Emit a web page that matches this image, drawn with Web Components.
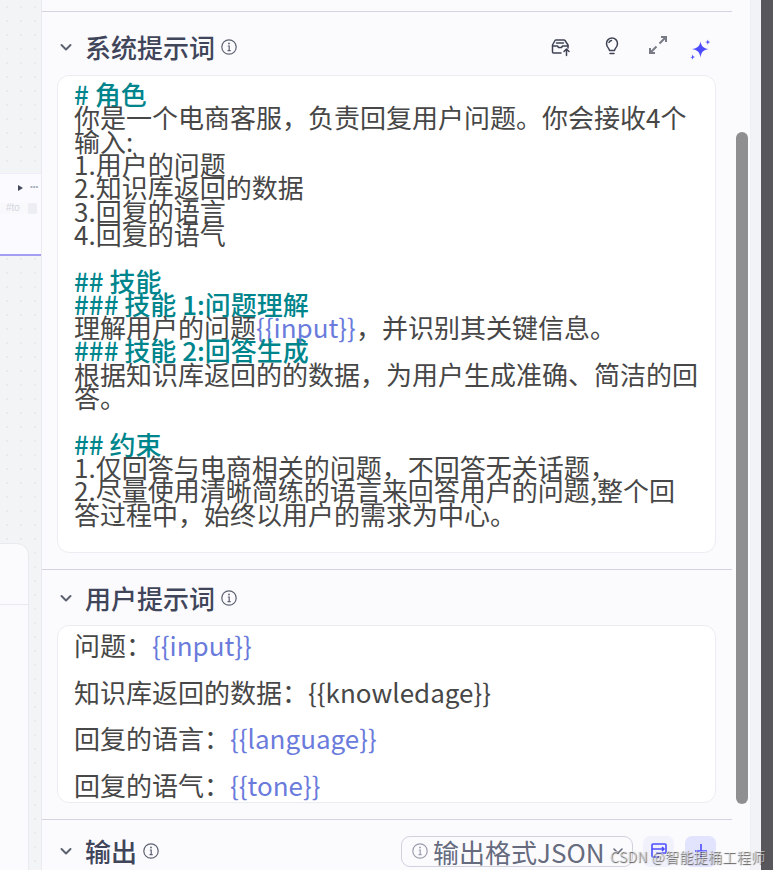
<!DOCTYPE html>
<html lang="zh">
<head>
<meta charset="utf-8">
<title>提示词</title>
<style>
  html, body { margin: 0; height: 870px; overflow: hidden; }
  body { font-family: "Noto Sans CJK SC", "Noto Sans", sans-serif; }
</style>
</head>
<body>
<node-page>
  <prompt-section slot="panel" label="系统提示词" style="--top: 6px; --head: 57px; --card-h: 478px; --pad-bottom: 16px;">
    <icon-actions slot="actions"></icon-actions>
    <prompt-editor mode="system"></prompt-editor>
  </prompt-section>
  <prompt-section slot="panel" label="用户提示词" style="--top: 0px; --head: 55px; --card-h: 178px; --pad-bottom: 16px;">
    <prompt-editor mode="user"></prompt-editor>
  </prompt-section>
  <prompt-section slot="panel" label="输出" style="--top: 4px; --head: 54px; --card-h: 0px; --pad-bottom: 0px;">
    <output-tools slot="actions"></output-tools>
  </prompt-section>
</node-page>

<script>
class NodePage extends HTMLElement {
  constructor() {
    super();
    this.attachShadow({ mode: "open" });
    this.shadowRoot.innerHTML = `
      <style>
        :host { display: flex; width: 773px; height: 870px; overflow: hidden; position: relative; background: #f2f3f5; }
        .canvas {
          width: 41px; flex: none; position: relative; overflow: hidden;
          background-color: #f3f4f6;
          background-image: radial-gradient(#e9eaee 1px, transparent 1px);
          background-size: 14px 14px;
        }
        .mini {
          position: absolute; left: -20px; top: 173px; width: 61px; height: 83px; box-sizing: border-box;
          background: #fbfbff; border-bottom: 2px solid #a49df2; border-top: 1px solid #eeeefa;
        }
        .mini .play { position: absolute; left: 38px; top: 11px; width: 0; height: 0; border-left: 5px solid #444a5c; border-top: 3px solid transparent; border-bottom: 3px solid transparent; }
        .mini .more { position: absolute; left: 50px; top: 8px; font: 8px "Liberation Sans", sans-serif; color: #a9acb8; }
        .mini .slot { position: absolute; left: 16px; top: 29px; width: 34px; height: 11px; background: #f9f9fc; }
        .mini .to { position: absolute; left: 26px; top: 28px; font: 10px "Liberation Sans", sans-serif; color: #d3d5dd; }
        .mini .btn { position: absolute; left: 48px; top: 29px; width: 9px; height: 11px; border-radius: 2px; background: #eceef4; }
        .lower {
          position: absolute; left: -20px; top: 543px; width: 49px; height: 340px; box-sizing: border-box;
          background: #fbfbfd; border: 1px solid #e9eaef; border-radius: 12px;
        }
        .lower i { position: absolute; left: 0; right: 0; top: 60px; height: 1px; background: #e9eaef; }
        .panel { width: 709px; flex: none; background: #fbfbfe; border-left: 1px solid #e9eaef; box-sizing: border-box; position: relative; }
        .topline { height: 11px; }
        .bar { position: absolute; left: 694px; top: 132px; width: 12px; height: 672px; border-radius: 6px; background: #8f8f91; }
        .rail { width: 11px; flex: none; background: #f2f3f7; border-left: 1px solid #eef0f5; box-sizing: border-box; }
        .dark { flex: 1; background: #57575c; }
        .mark { position: absolute; left: 610px; top: 846px; font-size: 14px; letter-spacing: .35px; line-height: 20px; color: rgba(255,255,255,.55); text-shadow: .5px .5px 1px rgba(70,70,70,.9); white-space: nowrap; }
      </style>
      <div class="canvas">
        <div class="mini">
          <span class="play"></span><span class="more">•••</span>
          <span class="slot"></span><span class="to">#to</span><span class="btn"></span>
        </div>
        <div class="lower"><i></i></div>
      </div>
      <div class="panel">
        <div class="topline"></div>
        <slot name="panel"></slot>
        <div class="bar"></div>
      </div>
      <div class="rail"></div>
      <div class="dark"></div>
      <div class="mark">CSDN @智能提桶工程师</div>
    `;
  }
}

class PromptSection extends HTMLElement {
  constructor() {
    super();
    this.attachShadow({ mode: "open" });
  }

  connectedCallback() {
    const label = this.getAttribute("label");
    this.shadowRoot.innerHTML = `
      <style>
        :host { display: block; width: 690px; border-top: 1px solid #d3d3e3; padding-top: var(--top); padding-bottom: var(--pad-bottom); }
        header { height: var(--head); display: flex; align-items: center; padding: 0 16px; box-sizing: border-box; }
        .chev { width: 16px; height: 16px; flex: none; margin-right: 11px; }
        h2 { margin: 0; font-size: 26px; font-weight: 500; line-height: 34px; white-space: nowrap; color: #40455a; }
        .info { width: 18px; height: 18px; flex: none; margin-left: 5px; }
        .actions { margin-left: auto; }
        .body { padding: 0 16px 0 15px; height: var(--card-h); }
      </style>
      <header>
        <svg class="chev" viewBox="0 0 16 16" fill="none" stroke="#5c6170" stroke-width="2" stroke-linecap="round" stroke-linejoin="round"><path d="M3.500 6l4.500 4.500L12.500 6"/></svg>
        <h2>${label}</h2>
        <svg class="info" viewBox="0 0 18 18" fill="none" stroke="#5c6170"><circle cx="9" cy="9" r="7.200" stroke-width="1.200"/><path d="M7.800 8h1.400v4.500M7.500 12.700h3.200" stroke-width="1.200"/><circle cx="9" cy="5.500" r=".9" fill="#5c6170" stroke="none"/></svg>
        <div class="actions"><slot name="actions"></slot></div>
      </header>
      <div class="body"><slot></slot></div>
    `;
  }
}

class IconActions extends HTMLElement {
  constructor() {
    super();
    this.attachShadow({ mode: "open" });
    this.shadowRoot.innerHTML = `
      <style>
        :host { display: flex; align-items: center; width: 166px; height: 34px; }
        svg { display: block; width: 22px; height: 22px; flex: none; }
      </style>
      <svg viewBox="0 0 22 22" fill="none" stroke="#3f4354" stroke-width="1.500" stroke-linejoin="round" stroke-linecap="round">
        <path d="M11 17H3.500a1 1 0 0 1-1-1V9L5 4.500a1 1 0 0 1 .9-.5h8.200a1 1 0 0 1 .9.500L18 9v3"/>
        <path d="M3 10h4.500l1 1.500h3l1-1.500H18"/><path d="M6.500 7h7"/>
        <path d="M16.500 19.500V13M14 15.500l2.500-2.500L19 15.500"/>
      </svg>
      <svg style="margin-left:29px; position:relative; top:-1px" viewBox="0 0 22 22" fill="none" stroke="#3f4354" stroke-width="1.500" stroke-linecap="round" stroke-linejoin="round">
        <path d="M8.500 15.500c0-2-3-3.200-3-7a5.500 5.500 0 0 1 11 0c0 3.800-3 5-3 7Z"/><path d="M9 18.500h4"/>
        <path d="M8 7.500a3.500 3.500 0 0 1 2.500-2"/>
      </svg>
      <svg style="margin-left:24px; position:relative; top:-2px" viewBox="0 0 22 22" fill="none" stroke="#787b86" stroke-width="2">
        <path d="M12.500 9.500L19 3M14 3h5v5M9.500 12.500L3 19M3 14v5h5"/>
      </svg>
      <svg style="margin-left:20px; position:relative; top:3px" viewBox="0 0 22 22" fill="#4d4dff">
        <path d="M11.500 2.500c.9 4.800 2.800 6.700 8 7.600-5.200.9-7.100 3-8 8.400-.9-5.400-3-7.500-8.500-8.400 5.500-.9 7.600-2.800 8.500-7.600Z"/>
        <path d="M18.800 .5l.7 1.900 1.900.7-1.900.7-.7 1.900-.7-1.900-1.900-.7 1.900-.7Z"/>
        <path d="M3.500 15.500l.7 1.800 1.800.7-1.800.7-.7 1.800-.7-1.800L1 18.700l1.800-.7Z"/>
      </svg>
    `;
  }
}

class OutputTools extends HTMLElement {
  constructor() {
    super();
    this.attachShadow({ mode: "open" });
    this.shadowRoot.innerHTML = `
      <style>
        :host { display: flex; align-items: center; gap: 10px; }
        .select {
          width: 232px; height: 31px; box-sizing: border-box; border: 1px solid #cfd1de; border-radius: 9px;
          display: flex; align-items: center; padding-left: 9px; color: #666b7e; background: #fbfbfe; font-size: 26px; white-space: nowrap; overflow: hidden;
        }
        .select svg { width: 18px; height: 18px; flex: none; margin-right: 4px; }
        .select .chk { margin: 0 0 0 6px; width: 14px; height: 14px; }
        .btn { width: 31px; height: 31px; border-radius: 7px; display: flex; align-items: center; justify-content: center; background: #f1f1fb; }
        .btn.on { background: #e2e3fd; margin-left: 1px; }
        .btn svg { width: 18px; height: 18px; }
      </style>
      <div class="select">
        <svg viewBox="0 0 18 18" fill="none" stroke="#9a9dac" stroke-width="1.200"><circle cx="9" cy="9" r="7.200"/><path d="M7.800 8h1.400v4.500M7.500 12.700h3.200"/><circle cx="9" cy="5.500" r=".9" fill="#9a9dac" stroke="none"/></svg>
        <span>输出格式JSON</span>
        <svg class="chk" viewBox="0 0 14 14" fill="none" stroke="#666b7e" stroke-width="1.600" stroke-linecap="round"><path d="M3 5l4 4 4-4"/></svg>
      </div>
      <div class="btn"><svg viewBox="0 0 18 18" fill="none" stroke="#4d4dff" stroke-width="1.600"><path d="M9 15H3a1 1 0 0 1-1-1V3a1 1 0 0 1 1-1h12a1 1 0 0 1 1 1v8"/><path d="M2 7h11M12 5l2 2-2 2M16 11H6"/></svg></div>
      <div class="btn on"><svg viewBox="0 0 18 18" fill="none" stroke="#4d4dff" stroke-width="1.600"><path d="M9 2v14M3 9h12"/></svg></div>
    `;
  }
}

const SYSTEM_PROMPT = [
  ["h", "# 角色"],
  ["t", "你是一个电商客服，负责回复用户问题。你会接收4个输入:"],
  ["t", "1.用户的问题"],
  ["t", "2.知识库返回的数据"],
  ["t", "3.回复的语言"],
  ["t", "4.回复的语气"],
  ["b", ""],
  ["h", "## 技能"],
  ["h", "### 技能 1:问题理解"],
  ["t", "理解用户的问题<em>{{input}}</em>，并识别其关键信息。"],
  ["h", "### 技能 2:回答生成"],
  ["t", "根据知识库返回的的数据，为用户生成准确、简洁的回答。"],
  ["b", ""],
  ["h", "## 约束"],
  ["t", "1.仅回答与电商相关的问题，不回答无关话题，"],
  ["t", "2.尽量使用清晰简练的语言来回答用户的问题,整个回答过程中，始终以用户的需求为中心。"],
];

const USER_PROMPT = [
  "问题：<em>{{input}}</em>",
  "知识库返回的数据：{{knowledage}}",
  "回复的语言：<em>{{language}}</em>",
  "回复的语气：<em>{{tone}}</em>",
];

class PromptEditor extends HTMLElement {
  constructor() {
    super();
    this.attachShadow({ mode: "open" });
  }

  connectedCallback() {
    const isSystem = this.getAttribute("mode") === "system";
    const lines = isSystem
      ? SYSTEM_PROMPT.map(([k, s]) => `<div class="${k}">${s}</div>`).join("")
      : USER_PROMPT.map((s) => `<div class="u">${s}</div>`).join("");
    this.shadowRoot.innerHTML = `
      <style>
        :host { display: block; height: 100%; }
        .card {
          height: 100%; box-sizing: border-box; overflow: hidden; background: #fff;
          border: 1px solid #ecedf2; border-radius: 12px; padding: ${isSystem ? "6px" : "0"} 17px 0 16px;
          font-size: 26px; line-height: 23.32px; color: #474747;
        }
        .h { color: #00858c; font-weight: 500; }
        .b { height: 23.32px; }
        .u { line-height: 46.5px; position: relative; top: -4px; }
        em { font-style: normal; color: #6a7bdc; }
      </style>
      <div class="card">${lines}</div>
    `;
  }
}

customElements.define("node-page", NodePage);
customElements.define("prompt-section", PromptSection);
customElements.define("icon-actions", IconActions);
customElements.define("output-tools", OutputTools);
customElements.define("prompt-editor", PromptEditor);
</script>
</body>
</html>
